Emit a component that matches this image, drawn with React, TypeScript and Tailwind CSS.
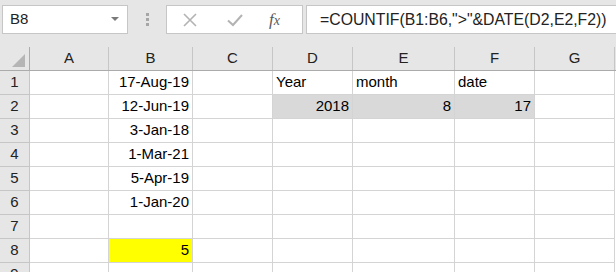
import React from "react";

const cols = [
  { name: "A", w: 79 },
  { name: "B", w: 84 },
  { name: "C", w: 80 },
  { name: "D", w: 80 },
  { name: "E", w: 102 },
  { name: "F", w: 80 },
  { name: "G", w: 80 },
];

type Cell = { v?: string; align?: "l" | "r"; fill?: string };

const data: Record<number, Record<string, Cell>> = {
  1: { B: { v: "17-Aug-19", align: "r" }, D: { v: "Year" }, E: { v: "month" }, F: { v: "date" } },
  2: {
    B: { v: "12-Jun-19", align: "r" },
    D: { v: "2018", align: "r", fill: "bg-[#d9d9d9]" },
    E: { v: "8", align: "r", fill: "bg-[#d9d9d9]" },
    F: { v: "17", align: "r", fill: "bg-[#d9d9d9]" },
  },
  3: { B: { v: "3-Jan-18", align: "r" } },
  4: { B: { v: "1-Mar-21", align: "r" } },
  5: { B: { v: "5-Apr-19", align: "r" } },
  6: { B: { v: "1-Jan-20", align: "r" } },
  7: {},
  8: { B: { v: "5", align: "r", fill: "bg-[#ffff00]" } },
  9: {},
};

function TopBar() {
  return (
    <div className="h-[47px] flex items-start pt-[5px] pl-[2px] bg-[#e6e6e6]">
      <div className="w-[126px] h-[29px] bg-white border border-[#c6c6c6] flex items-center justify-between pl-[7px] pr-[8px]">
        <span className="text-[15px] text-[#222]">B8</span>
        <svg width="8" height="5" viewBox="0 0 8 5">
          <path d="M0 0 L8 0 L4 4 Z" fill="#7a7a7a" />
        </svg>
      </div>
      <div className="w-[38px] h-[29px] flex flex-col items-center justify-center gap-[2px]">
        <div className="w-[3px] h-[3px] bg-[#a6a6a6]" />
        <div className="w-[3px] h-[3px] bg-[#a6a6a6]" />
        <div className="w-[3px] h-[3px] bg-[#a6a6a6]" />
      </div>
      <div className="w-[137px] h-[29px] bg-white border border-[#c6c6c6] flex items-center">
        <svg className="ml-[15px]" width="16" height="14" viewBox="0 0 16 14">
          <path d="M2 1 L14 13 M14 1 L2 13" stroke="#b3b3b3" strokeWidth="1.6" />
        </svg>
        <svg className="ml-[28px]" width="18" height="14" viewBox="0 0 18 14">
          <path d="M2 7.5 L7 12 L16 2" stroke="#b3b3b3" strokeWidth="2" fill="none" />
        </svg>
        <span className="ml-[25px] text-[17px] italic text-[#5a5a5a] font-['Liberation_Serif',serif] leading-none">
          f<span className="text-[14px]">x</span>
        </span>
      </div>
      <div className="ml-[3px] flex-1 h-[29px] bg-white border border-[#c6c6c6] border-r-0 flex items-center pl-[13px]">
        <span className="text-[15.8px] text-[#222]">=COUNTIF(B1:B6,"&gt;"&amp;DATE(D2,E2,F2))</span>
      </div>
    </div>
  );
}

export default function App() {
  return (
    <div className="w-[616px] h-[272px] overflow-hidden bg-white font-['Liberation_Sans',Arial,sans-serif] text-black">
      <TopBar />
      <div className="flex h-[24px] bg-[#e6e6e6] border-b border-[#ababab]">
        <div className="w-[30px] h-full border-r border-[#ababab] relative">
          <svg className="absolute right-[4px] bottom-[3px]" width="13" height="13" viewBox="0 0 13 13">
            <path d="M13 0 L13 13 L0 13 Z" fill="#b5b5b5" />
          </svg>
        </div>
        {cols.map((c) => (
          <div
            key={c.name}
            style={{ width: c.w }}
            className="h-full border-r border-[#c6c6c6] flex items-center justify-center text-[15px] text-[#222]"
          >
            {c.name}
          </div>
        ))}
      </div>
      {Object.keys(data).map((k) => {
        const r = Number(k);
        return (
          <div key={r} className="flex h-[24px]">
            <div className="w-[30px] h-full bg-[#e6e6e6] border-r border-b border-[#c6c6c6] flex items-center justify-center text-[15px] text-[#222]">
              {r}
            </div>
            {cols.map((c) => {
              const cell = data[r][c.name];
              return (
                <div
                  key={c.name}
                  style={{ width: c.w }}
                  className={
                    "h-full border-r border-b border-[#d4d4d4] flex items-center px-[3px] text-[15px] " +
                    (cell?.fill ?? "bg-white") +
                    (cell?.align === "r" ? " justify-end" : " justify-start")
                  }
                >
                  {cell?.v}
                </div>
              );
            })}
          </div>
        );
      })}
    </div>
  );
}
